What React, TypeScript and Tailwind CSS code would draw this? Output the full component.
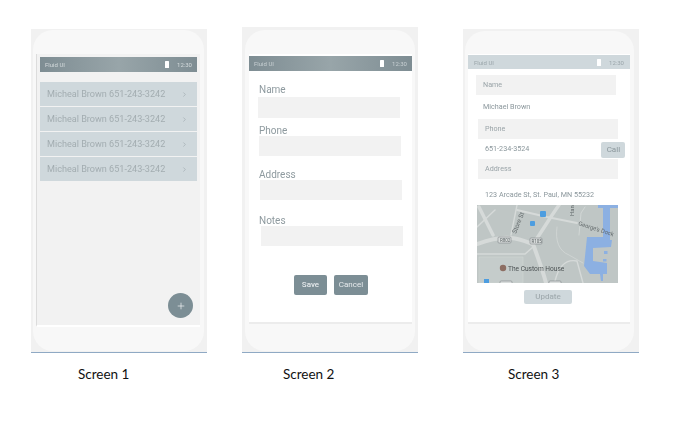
import React from 'react';
import { ChevronRight, Plus } from 'lucide-react';

function StatusBar({ className }: { className: string }) {
  return (
    <div className={`flex items-center justify-between font-['Roboto',sans-serif] text-[6px] ${className}`}>
      <span>Fluid UI</span>
      <span className="flex items-center gap-[8px]">
        <span className="h-[7px] w-[4px] rounded-[0.5px] bg-white" />
        <span>12:30</span>
      </span>
    </div>
  );
}

function MapPicture() {
  return (
    <svg viewBox="0 0 141 78" className="h-[78px] w-[141px] shrink-0">
      <rect width="141" height="78" fill="#bfc6c5" />
      <path d="M2 52 H46 V78 H2 Z" fill="#c5cccb" stroke="#d0d6d5" strokeWidth="0.6" />
      <g fill="none" stroke="#d6dad9" strokeLinecap="round">
        <path d="M0 39 C 14 34 24 32 34 33 C 44 34 50 37 56 39 C 60 50 66 66 69 78" strokeWidth="4" />
        <path d="M2 2 L 16 30" strokeWidth="3.5" />
        <path d="M0 22 L 18 5" strokeWidth="1.4" />
        <path d="M56 39 C 64 28 72 14 82 0" strokeWidth="3.5" />
        <path d="M40 5 L 70 12 L 100 18" strokeWidth="1.8" />
        <path d="M40 0 L 34 30" strokeWidth="1.4" />
        <path d="M0 49 H48 L 56 42" strokeWidth="1.5" />
        <path d="M78 76 C 82 60 90 54 100 56 L 106 78" strokeWidth="1.4" />
        <path d="M80 22 C 78 36 82 46 92 50 L 106 58" strokeWidth="0.7" />
        <path d="M108 2 L 104 8 L 102 30" strokeWidth="0.8" />
      </g>
      <path d="M121 0 H141 V3 H133 V35 L 135 35 L 134 42 L 116 43 V56 L 130 58 V69 H113 L 107 61 L 110 32 H126 V3 H121 Z" fill="#8cb0e2" />
      <path d="M123 69 H126 V76 H124 Z" fill="#8cb0e2" />
      <rect x="127" y="46" width="3.5" height="3" fill="#8cb0e2" />
      <rect x="126" y="54" width="3.5" height="2.5" fill="#8cb0e2" />
      <rect x="63" y="6" width="6" height="6" rx="1" fill="#4d9de0" />
      <rect x="53" y="16" width="5" height="5" rx="1" fill="#4d9de0" />
      <rect x="7" y="74" width="5" height="4" fill="#4d9de0" />
      <g fontFamily="Roboto, sans-serif" fill="#5f6668">
        <rect x="21" y="32" width="13" height="6" rx="1" fill="#d8dcdb" stroke="#70777a" strokeWidth="0.5" />
        <text x="23" y="37" fontSize="4.5">R802</text>
        <rect x="53" y="33" width="12" height="6" rx="1" fill="#d8dcdb" stroke="#70777a" strokeWidth="0.5" />
        <text x="54.5" y="38" fontSize="4.5">R105</text>
        <rect x="23" y="76" width="12" height="5" rx="1" fill="#d8dcdb" stroke="#70777a" strokeWidth="0.5" />
        <rect x="72" y="76" width="12" height="5" rx="1" fill="#d8dcdb" stroke="#70777a" strokeWidth="0.5" />
        <text x="0" y="0" fontSize="6.4" transform="translate(39 29) rotate(-68)">Store St</text>
        <text x="0" y="0" fontSize="5.8" transform="translate(101 20) rotate(18)">George&apos;s Dock</text>
        <text x="0" y="0" fontSize="6" transform="translate(97 11) rotate(-90)">Han</text>
        <circle cx="26" cy="63" r="3.2" fill="#8d6e63" />
        <text x="31" y="66" fontSize="6.6" fill="#4b5153">The Custom House</text>
      </g>
    </svg>
  );
}

function Screen1() {
  return (
    <div className="relative flex h-[273px] flex-col border-b-2 border-l border-b-white border-l-[#dcdcdc] bg-[#f2f2f2] pl-[3px] pr-[3px] pt-[3px] font-['Roboto',sans-serif]">
      <StatusBar className="h-[15px] bg-[linear-gradient(90deg,#7e8d93,#98a5a9_50%,#7e8d93)] px-[5px] text-[#d5dbdd]" />
      <div className="mt-[10px] flex flex-col gap-[1px]">
        {[0, 1, 2, 3].map((i) => (
          <div key={i} className="flex h-[24px] items-center justify-between whitespace-nowrap bg-[#cfd8dc] pl-[7px] pr-[9px] pt-[1px] text-[9.1px] text-[#a3adb1]">
            <span>Micheal Brown 651-243-3242</span>
            <ChevronRight size={7} strokeWidth={2} className="text-[#98a3a8]" />
          </div>
        ))}
      </div>
      <div className="absolute bottom-[7px] right-[7px] flex h-[25px] w-[25px] items-center justify-center rounded-full bg-[#7c8e95]">
        <Plus size={10} strokeWidth={1.5} className="text-white" />
      </div>
    </div>
  );
}

function FormField({ label, labelClass, boxClass }: { label: string; labelClass: string; boxClass: string }) {
  return (
    <>
      <div className={`h-[12px] pl-[10px] pt-[1px] text-[10px] leading-[12px] text-[#8e9a9f] ${labelClass}`}>{label}</div>
      <div className={`h-[20px] w-[142px] bg-[#f2f2f2] ${boxClass}`} />
    </>
  );
}

function Screen2() {
  return (
    <div className="flex h-[270px] flex-col border-b-2 border-[#ececec] bg-white pt-[2px] font-['Roboto',sans-serif]">
      <StatusBar className="h-[15px] bg-[linear-gradient(90deg,#7e8d93,#98a5a9_50%,#7e8d93)] px-[5px] text-[#c8d0d3]" />
      <FormField label="Name" labelClass="mt-[12px]" boxClass="ml-[9px] mt-[2px] !h-[21px]" />
      <FormField label="Phone" labelClass="mt-[6px]" boxClass="ml-[10px]" />
      <FormField label="Address" labelClass="mt-[12px]" boxClass="ml-[11px]" />
      <FormField label="Notes" labelClass="mt-[14px]" boxClass="ml-[12px]" />
      <div className="ml-[45px] mt-[29px] flex items-start gap-[7px] text-[8px] text-[#e6eaec]">
        <button className="flex h-[20px] w-[33px] items-center justify-center rounded-[2px] bg-[#7c8e95] font-medium">Save</button>
        <button className="flex h-[20px] w-[34px] items-center justify-center rounded-[2px] bg-[#7c8e95]">Cancel</button>
      </div>
    </div>
  );
}

function LabelBox({ label, className }: { label: string; className: string }) {
  return (
    <div className={`flex h-[20px] w-[140px] items-center bg-[#f2f2f2] pl-[7px] pt-[1px] text-[7.2px] text-[#9aa4a8] ${className}`}>{label}</div>
  );
}

function Screen3() {
  return (
    <div className="flex h-[270px] flex-col border-b-2 border-[#ececec] bg-white pt-[1px] font-['Roboto',sans-serif]">
      <StatusBar className="h-[14px] bg-[#cfd8dc] px-[6px] text-[#9aa5aa]" />
      <LabelBox label="Name" className="ml-[8px] mt-[6px]" />
      <div className="ml-[15px] flex h-[24px] items-center text-[7.2px] text-[#8b979c]">Michael Brown</div>
      <LabelBox label="Phone" className="ml-[10px]" />
      <div className="flex h-[20px] items-center">
        <span className="ml-[17px] pt-[1px] text-[7.2px] text-[#8b979c]">651-234-3524</span>
        <button className="ml-[72px] mt-[2px] flex h-[16px] w-[24px] shrink-0 items-center justify-center rounded-[2px] bg-[#cfd8dc] text-[8px] text-[#8b979c]">Call</button>
      </div>
      <LabelBox label="Address" className="ml-[10px]" />
      <div className="ml-[17px] flex h-[26px] items-center pt-[6px] text-[7.2px] text-[#8b979c]">123 Arcade St, St. Paul, MN 55232</div>
      <div className="ml-[9px] flex">
        <MapPicture />
      </div>
      <button className="ml-[56px] mt-[7px] flex h-[14px] w-[48px] items-center justify-center rounded-[2px] bg-[#cfd8dc] text-[8px] font-medium text-[#a3adb1]">Update</button>
    </div>
  );
}

export default function App() {
  return (
    <div className="flex h-[425px] w-[695px] items-start overflow-hidden bg-white">
      <div className="ml-[31px] mt-[29px] w-[176px]">
        <div className="h-[324px] border-b border-[#8fa9c4] bg-[#f1f1f1] pb-[1px] pl-[2px] pr-[3px] pt-[1px]">
          <div className="h-full rounded-[20px] bg-[#f8f8f8] pl-[3px] pr-[4px] pt-[24px] blur-[0.3px]">
            <Screen1 />
          </div>
        </div>
        <div className="mt-[12px] pl-[47px] font-['Lato',sans-serif] text-[13.5px] leading-[18px] text-[#111]">Screen 1</div>
      </div>
      <div className="ml-[35px] mt-[27px] w-[176px]">
        <div className="h-[326px] border-b border-[#8fa9c4] bg-[#f1f1f1] pb-[1px] pl-[3px] pr-[3px] pt-[3px]">
          <div className="h-full rounded-[20px] bg-[#f8f8f8] pl-[4px] pr-[3px] pt-[24px] blur-[0.3px]">
            <Screen2 />
          </div>
        </div>
        <div className="mt-[12px] pl-[41px] font-['Lato',sans-serif] text-[13.5px] leading-[18px] text-[#111]">Screen 2</div>
      </div>
      <div className="ml-[45px] mt-[29px] w-[176px]">
        <div className="h-[324px] border-b border-[#8fa9c4] bg-[#f1f1f1] pb-[1px] pl-[2px] pr-[5px] pt-[2px]">
          <div className="h-full rounded-[20px] bg-[#f8f8f8] pl-[3px] pr-[4px] pt-[23px] blur-[0.3px]">
            <Screen3 />
          </div>
        </div>
        <div className="mt-[12px] pl-[45px] font-['Lato',sans-serif] text-[13.5px] leading-[18px] text-[#111]">Screen 3</div>
      </div>
    </div>
  );
}
